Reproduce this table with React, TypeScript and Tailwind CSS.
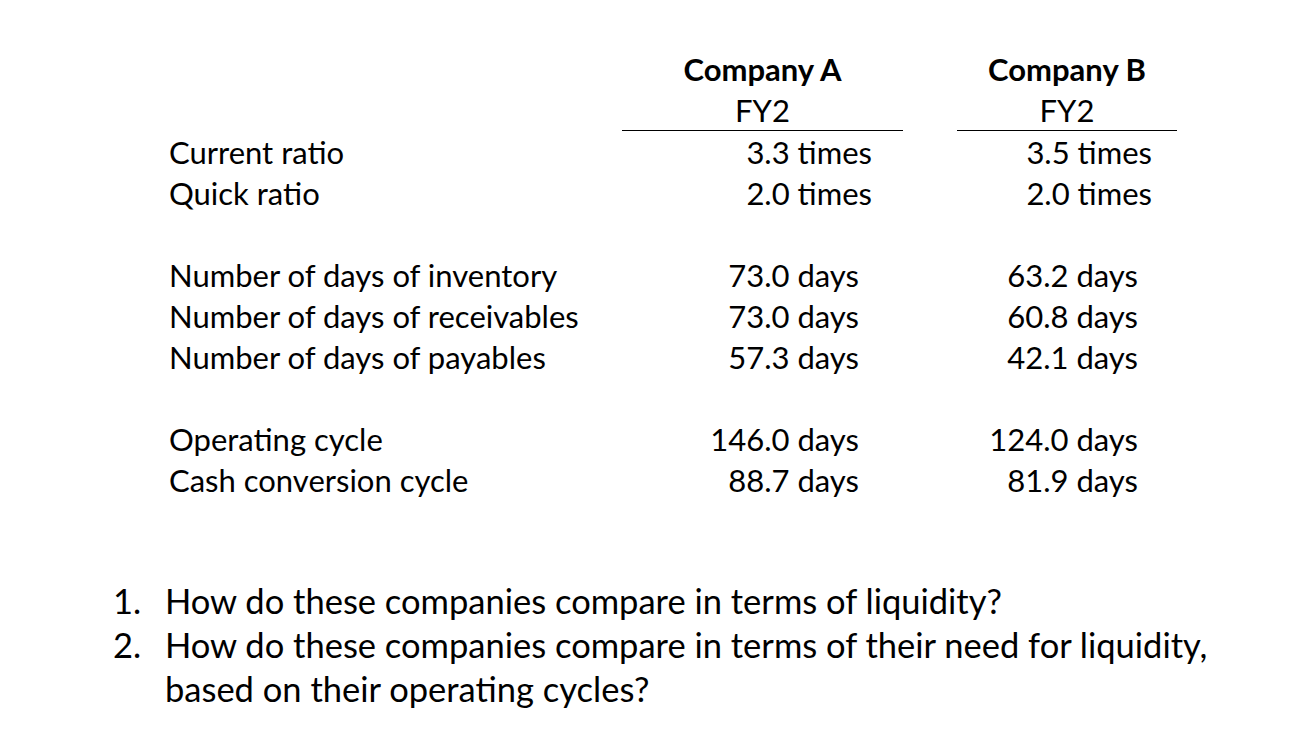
const rows: (null | { label: string; a: string; b: string; unit: 'times' | 'days' })[] = [
  { label: 'Current ratio', a: '3.3 times', b: '3.5 times', unit: 'times' },
  { label: 'Quick ratio', a: '2.0 times', b: '2.0 times', unit: 'times' },
  null,
  { label: 'Number of days of inventory', a: '73.0 days', b: '63.2 days', unit: 'days' },
  { label: 'Number of days of receivables', a: '73.0 days', b: '60.8 days', unit: 'days' },
  { label: 'Number of days of payables', a: '57.3 days', b: '42.1 days', unit: 'days' },
  null,
  { label: 'Operating cycle', a: '146.0 days', b: '124.0 days', unit: 'days' },
  { label: 'Cash conversion cycle', a: '88.7 days', b: '81.9 days', unit: 'days' },
];

export default function App() {
  return (
    <div className="w-[1300px] h-[742px] bg-white text-black font-['Lato',sans-serif] overflow-hidden">
      <div className="pt-[49px] pl-[169px] text-[31px]">
        {/* header */}
        <div className="flex">
          <div className="w-[453px]" />
          <div className="w-[281px] flex flex-col">
            <div className="h-[41px] flex items-center justify-center font-bold">Company A</div>
            <div className="h-[41px] flex items-center justify-center border-b border-black">FY2</div>
          </div>
          <div className="w-[54px]" />
          <div className="w-[220px] flex flex-col">
            <div className="h-[41px] flex items-center justify-center font-bold">Company B</div>
            <div className="h-[41px] flex items-center justify-center border-b border-black">FY2</div>
          </div>
        </div>

        <div className="mt-[1px]">
          {rows.map((r, i) =>
            r ? (
              <div key={i} className="flex h-[41px] items-center">
                <div className="w-[453px]">{r.label}</div>
                <div className={`w-[281px] text-right ${r.unit === 'times' ? 'pr-[31px]' : 'pr-[44px]'}`}>{r.a}</div>
                <div className="w-[54px]" />
                <div className={`w-[220px] text-right ${r.unit === 'times' ? 'pr-[25px]' : 'pr-[39px]'}`}>{r.b}</div>
              </div>
            ) : (
              <div key={i} className="h-[41px]" />
            )
          )}
        </div>
      </div>

      {/* questions */}
      <ol className="mt-[78px] pl-[113px] text-[34.5px] leading-[44px]">
        <li className="flex">
          <span className="w-[52px] shrink-0">1.</span>
          <span>How do these companies compare in terms of liquidity?</span>
        </li>
        <li className="flex">
          <span className="w-[52px] shrink-0">2.</span>
          <span className="w-[1075px]">
            How do these companies compare in terms of their need for liquidity, based on their operating cycles?
          </span>
        </li>
      </ol>
    </div>
  );
}
